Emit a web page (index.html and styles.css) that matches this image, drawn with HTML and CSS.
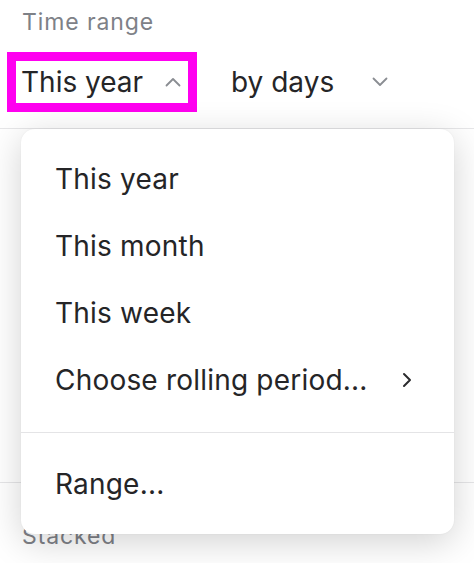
FILE: index.html
```html
<!DOCTYPE html>
<html lang="en">
<head>
<meta charset="utf-8">
<title>Time range</title>
<link rel="stylesheet" href="styles.css">
</head>
<body>
<div class="page">
  <section class="settings">
    <div class="field-label">Time range</div>
    <div class="controls">
      <button class="select select-highlight" type="button">
        <span class="select-text">This year</span>
        <svg class="chev" width="16" height="10" viewBox="0 0 16 10"><path d="M1.5 8.5 L8 2 L14.5 8.5" fill="none" stroke="#8a8d92" stroke-width="1.8" stroke-linecap="round" stroke-linejoin="round"/></svg>
      </button>
      <button class="select select-plain" type="button">
        <span class="select-text">by days</span>
        <svg class="chev chev-down" width="16" height="10" viewBox="0 0 16 10"><path d="M1.5 1.5 L8 8 L14.5 1.5" fill="none" stroke="#8a8d92" stroke-width="1.8" stroke-linecap="round" stroke-linejoin="round"/></svg>
      </button>
    </div>
  </section>
  <div class="divider"></div>
  <section class="options">
    <div class="options-body"></div>
    <div class="divider"></div>
    <div class="field-label stacked">Stacked</div>
  </section>

  <div class="menu" role="menu">
    <div class="menu-item">This year</div>
    <div class="menu-item">This month</div>
    <div class="menu-item">This week</div>
    <div class="menu-item has-sub">
      <span>Choose rolling period...</span>
      <svg class="sub-chev" width="10" height="16" viewBox="0 0 10 16"><path d="M2 2 L8 8 L2 14" fill="none" stroke="#2b2b2d" stroke-width="2" stroke-linecap="round" stroke-linejoin="round"/></svg>
    </div>
    <div class="menu-sep"></div>
    <div class="menu-item">Range...</div>
  </div>
</div>
</body>
</html>
```
FILE: styles.css
```css
* { box-sizing: border-box; }
html, body { margin: 0; padding: 0; background: #ffffff; }
body {
  font-family: Inter, "Noto Sans", "Liberation Sans", sans-serif;
  color: #252527;
  width: 474px;
  height: 563px;
  overflow: hidden;
}
.page { position: relative; width: 474px; height: 563px; }
.settings { padding: 8px 0 0 0; }
.field-label {
  font-size: 23px;
  line-height: 28px;
  letter-spacing: 0.9px;
  color: #7e8187;
  padding-left: 22px;
}
.controls {
  display: flex;
  align-items: center;
  margin-top: 16px;
  padding-left: 7px;
  height: 60px;
}
.select {
  display: flex;
  align-items: center;
  background: none;
  border: 0;
  font: inherit;
  font-size: 28px;
  color: #252527;
  padding: 0;
  margin: 0;
  cursor: pointer;
}
.select-highlight {
  border: 9px solid #ff00f0;
  height: 60px;
  width: 190px;
  padding: 0 0 0 5px;
}
.select-plain { margin-left: 34px; }
.chev { margin-left: 22px; }
.chev-down { margin-left: 38px; }
.divider { height: 1px; background: #e6e6e8; margin-top: 16px; }
.options-body { height: 353px; }
.options .divider { margin-top: 0; }
.stacked { margin-top: 39px; }

.menu {
  position: absolute;
  left: 21px;
  top: 129px;
  width: 433px;
  height: 405px;
  background: #ffffff;
  border-radius: 14px;
  box-shadow: 0 8px 36px rgba(0, 0, 0, 0.18), 0 0 2px rgba(0,0,0,0.06);
  padding: 16px 0 17px 0;
}
.menu-item {
  display: flex;
  align-items: center;
  height: 67px;
  padding-left: 34px;
  font-size: 28px;
  letter-spacing: 0.2px;
  color: #252527;
}
.has-sub .sub-chev { margin-left: 34px; }
.menu-sep { height: 1px; background: #e4e4e6; margin: 19px 0 17px 0; }
```
